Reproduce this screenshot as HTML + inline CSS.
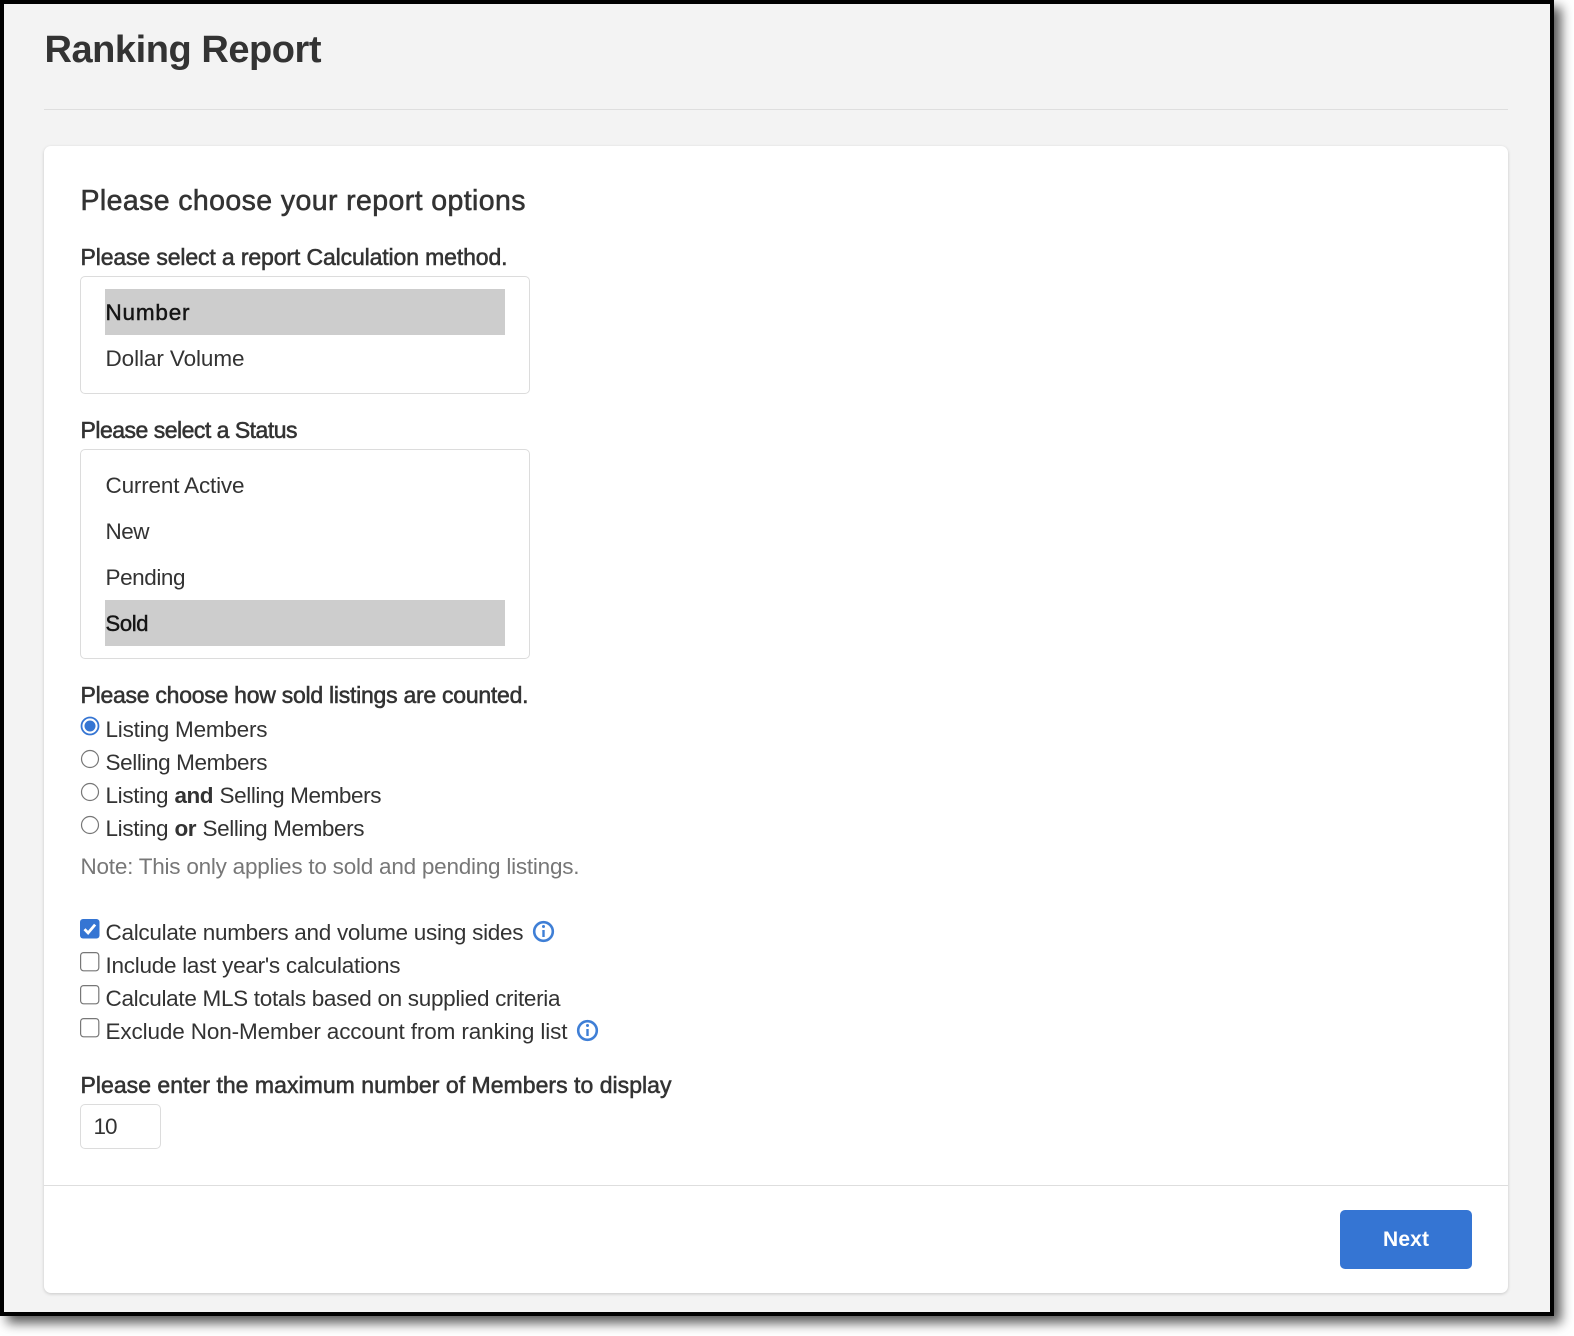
<!DOCTYPE html>
<html lang="en"><head><meta charset="utf-8"><title>Ranking Report</title>
<style>
html,body{margin:0;padding:0;width:1574px;height:1336px;background:#fff;overflow:hidden}
.abs{position:absolute;box-sizing:border-box}
#frame{left:0;top:0;width:1554px;height:1316px;background:#f3f3f3;border:4px solid #000;box-shadow:7px 7px 11px rgba(0,0,0,.66)}
#rule{left:44px;top:109px;width:1464px;height:1px;background:#dedede}
#card{left:44px;top:146px;width:1464px;height:1147px;background:#fff;border-radius:7px;box-shadow:0 1px 3px rgba(0,0,0,.18)}
.sel{background:#fff;border:1px solid #dcdcdc;border-radius:5px}
.hl{background:#cdcdcd}
#foot{left:44px;top:1185px;width:1464px;height:1px;background:#dedede}
#btn{left:1340px;top:1210px;width:132px;height:59px;background:#3575d3;border-radius:5px}
svg{position:absolute;left:0;top:0}
text{font-family:"Liberation Sans",Arial,sans-serif;fill:#333;font-size:22.5px}
.semi{stroke:#333;stroke-width:.55px}
.dark{fill:#151515;stroke:#151515;stroke-width:.45px}
.b{font-weight:700}
</style></head><body>
<div class="abs" id="frame"></div>
<div class="abs" id="rule"></div>
<div class="abs" id="card"></div>
<div class="abs sel" style="left:80px;top:276px;width:450px;height:118px"></div>
<div class="abs hl" style="left:105px;top:289px;width:400px;height:46px"></div>
<div class="abs sel" style="left:80px;top:449px;width:450px;height:210px"></div>
<div class="abs hl" style="left:105px;top:600px;width:400px;height:46px"></div>
<div class="abs sel" style="left:80px;top:1104px;width:81px;height:45px"></div>
<div class="abs" id="foot"></div>
<div class="abs" id="btn"></div>
<svg width="1574" height="1336" viewBox="0 0 1574 1336" xmlns="http://www.w3.org/2000/svg">
<text x="44.5" y="62" class="b" style="font-size:38px" textLength="277" lengthAdjust="spacing">Ranking Report</text>
<text x="80.5" y="210" class="semi" style="font-size:28.5px" textLength="445" lengthAdjust="spacing">Please choose your report options</text>
<text x="80.5" y="265" class="semi" style="font-size:23px" textLength="427" lengthAdjust="spacing">Please select a report Calculation method.</text>
<text x="105.5" y="320" class="dark" textLength="84" lengthAdjust="spacing">Number</text>
<text x="105.5" y="366" textLength="139" lengthAdjust="spacing">Dollar Volume</text>
<text x="80.5" y="438" class="semi" style="font-size:23px" textLength="217" lengthAdjust="spacing">Please select a Status</text>
<text x="105.5" y="493" textLength="139" lengthAdjust="spacing">Current Active</text>
<text x="105.5" y="539" textLength="44" lengthAdjust="spacing">New</text>
<text x="105.5" y="585" textLength="80" lengthAdjust="spacing">Pending</text>
<text x="105.5" y="631" class="dark" style="font-size:22px" textLength="43" lengthAdjust="spacing">Sold</text>
<text x="80.5" y="703" class="semi" style="font-size:23px" textLength="448" lengthAdjust="spacing">Please choose how sold listings are counted.</text>

<circle cx="90" cy="726" r="8.5" fill="#fff" stroke="#3575d3" stroke-width="1.8"/><circle cx="90" cy="726" r="5.5" fill="#3575d3"/>
<circle cx="90" cy="759" r="8.5" fill="#fff" stroke="#777" stroke-width="1.2"/>
<circle cx="90" cy="792" r="8.5" fill="#fff" stroke="#777" stroke-width="1.2"/>
<circle cx="90" cy="825" r="8.5" fill="#fff" stroke="#777" stroke-width="1.2"/>

<text x="105.5" y="737" textLength="162" lengthAdjust="spacing">Listing Members</text>
<text x="105.5" y="770" textLength="162" lengthAdjust="spacing">Selling Members</text>
<text x="105.5" y="803" textLength="63" lengthAdjust="spacing">Listing</text>
<text x="174.5" y="803" class="b" textLength="39" lengthAdjust="spacing">and</text>
<text x="219.5" y="803" textLength="162" lengthAdjust="spacing">Selling Members</text>
<text x="105.5" y="836" textLength="63" lengthAdjust="spacing">Listing</text>
<text x="174.5" y="836" class="b" textLength="22" lengthAdjust="spacing">or</text>
<text x="202.5" y="836" textLength="162" lengthAdjust="spacing">Selling Members</text>
<text x="80.5" y="874" style="fill:#777" textLength="499" lengthAdjust="spacing">Note: This only applies to sold and pending listings.</text>

<rect x="80" y="919" width="19.5" height="19.5" rx="3" fill="#3575d3"/>
<path d="M84.5 929.2l3.6 3.7 7-8.3" fill="none" stroke="#fff" stroke-width="2.8"/>
<rect x="80.6" y="952.6" width="18.2" height="18.2" rx="3" fill="#fff" stroke="#777" stroke-width="1.2"/>
<rect x="80.6" y="985.6" width="18.2" height="18.2" rx="3" fill="#fff" stroke="#777" stroke-width="1.2"/>
<rect x="80.6" y="1018.6" width="18.2" height="18.2" rx="3" fill="#fff" stroke="#777" stroke-width="1.2"/>

<text x="105.5" y="940" textLength="418" lengthAdjust="spacing">Calculate numbers and volume using sides</text>
<text x="105.5" y="973" textLength="295" lengthAdjust="spacing">Include last year's calculations</text>
<text x="105.5" y="1006" textLength="455" lengthAdjust="spacing">Calculate MLS totals based on supplied criteria</text>
<text x="105.5" y="1039" textLength="462" lengthAdjust="spacing">Exclude Non-Member account from ranking list</text>

<g fill="none" stroke="#3f7fd6">
<circle cx="543.5" cy="931.5" r="9.3" stroke-width="2.6"/>
<path d="M543.5 930v7" stroke-width="2.4"/>
<circle cx="587.5" cy="1030.5" r="9.3" stroke-width="2.6"/>
<path d="M587.5 1029v7" stroke-width="2.4"/>
</g>
<circle cx="543.5" cy="926.5" r="1.5" fill="#3f7fd6"/>
<circle cx="587.5" cy="1025.5" r="1.5" fill="#3f7fd6"/>

<text x="80.5" y="1093" class="semi" style="font-size:23px" textLength="591" lengthAdjust="spacing">Please enter the maximum number of Members to display</text>
<text x="93.5" y="1134" textLength="24" lengthAdjust="spacing">10</text>
<text x="1383" y="1246" class="b" style="fill:#fff;font-size:21px" textLength="46" lengthAdjust="spacing">Next</text>
</svg>
</body></html>
